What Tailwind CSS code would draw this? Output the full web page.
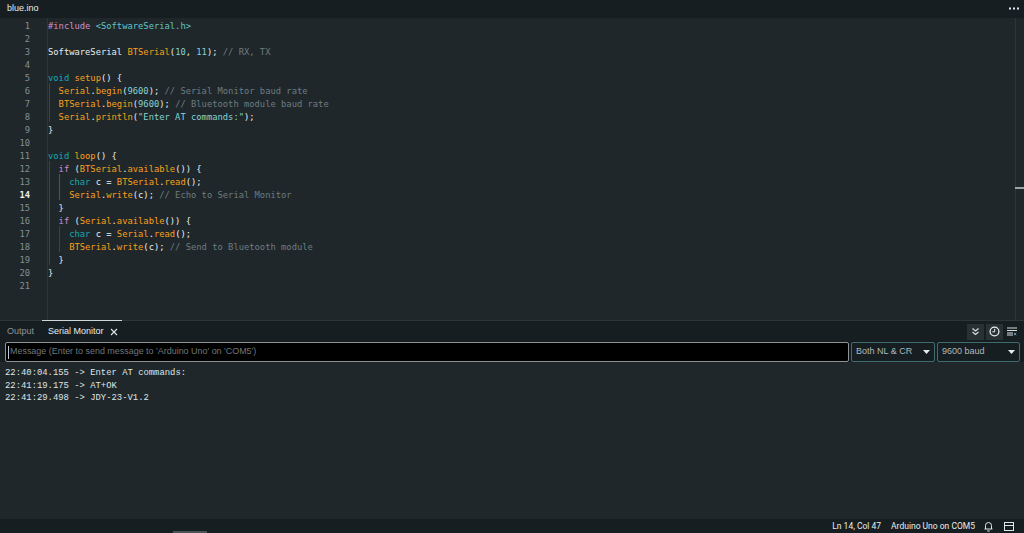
<!doctype html>
<html><head><meta charset="utf-8"><script src="https://cdn.jsdelivr.net/npm/@tailwindcss/browser@4"></script></head>
<body class="m-0 overflow-hidden bg-[#171e21]">
<div class="w-[1024px] h-[533px] flex flex-col bg-[#171e21] font-['Liberation_Sans',sans-serif] overflow-hidden">
  <div class="h-[18px] shrink-0 flex items-center justify-between bg-[#171e21]">
    <span class="pl-[7px] pb-[2px] text-[9px] text-[#e6eeee] leading-[15px]">blue.ino</span>
    <svg class="mr-[4px]" width="12" height="6" viewBox="0 0 12 6"><rect x="1" y="1.5" width="2" height="2" fill="#dfeaf0"/><rect x="5" y="1.5" width="2" height="2" fill="#dfeaf0"/><rect x="9" y="1.5" width="2" height="2" fill="#dfeaf0"/></svg>
  </div>
  <div class="h-[302px] shrink-0 flex bg-[#1f272a] relative">
    <div class="w-[48px] shrink-0 border-r border-[#2c3538] pt-[1.5px] text-right pr-[17px] font-['DejaVu_Sans_Mono',monospace] text-[8.8px] leading-[13.05px] text-[#828f94]">
      <div>1</div><div>2</div><div>3</div><div>4</div><div>5</div><div>6</div><div>7</div><div>8</div><div>9</div><div>10</div><div>11</div><div>12</div><div>13</div><div class="text-[#e8edee] font-bold">14</div><div>15</div><div>16</div><div>17</div><div>18</div><div>19</div><div>20</div><div>21</div>
    </div>
    <pre class="flex-1 pt-[1.5px] m-0 font-['DejaVu_Sans_Mono',monospace] text-[8.8px] leading-[13.05px] text-[#e6eef0] relative"><span class="text-[#cf8fca]">#include</span> <span class="text-[#62c4c8]">&lt;SoftwareSerial.h&gt;</span>

SoftwareSerial <span class="text-[#f7a01a]">BTSerial</span>(<span class="text-[#86d3d6]">10</span>, <span class="text-[#86d3d6]">11</span>); <span class="text-[#6d7c82]">// RX, TX</span>

<span class="text-[#12aab0]">void</span> <span class="text-[#f7a01a]">setup</span>() {
  <span class="text-[#f7a01a]">Serial</span>.<span class="text-[#f7a01a]">begin</span>(<span class="text-[#86d3d6]">9600</span>); <span class="text-[#6d7c82]">// Serial Monitor baud rate</span>
  <span class="text-[#f7a01a]">BTSerial</span>.<span class="text-[#f7a01a]">begin</span>(<span class="text-[#86d3d6]">9600</span>); <span class="text-[#6d7c82]">// Bluetooth module baud rate</span>
  <span class="text-[#f7a01a]">Serial</span>.<span class="text-[#f7a01a]">println</span>(<span class="text-[#86d3d6]">"Enter AT commands:"</span>);
}

<span class="text-[#12aab0]">void</span> <span class="text-[#f7a01a]">loop</span>() {
  <span class="text-[#cf8fca]">if</span> (<span class="text-[#f7a01a]">BTSerial</span>.<span class="text-[#f7a01a]">available</span>()) {
    <span class="text-[#12aab0]">char</span> c = <span class="text-[#f7a01a]">BTSerial</span>.<span class="text-[#f7a01a]">read</span>();
    <span class="text-[#f7a01a]">Serial</span>.<span class="text-[#f7a01a]">write</span>(c); <span class="text-[#6d7c82]">// Echo to Serial Monitor</span>
  }
  <span class="text-[#cf8fca]">if</span> (<span class="text-[#f7a01a]">Serial</span>.<span class="text-[#f7a01a]">available</span>()) {
    <span class="text-[#12aab0]">char</span> c = <span class="text-[#f7a01a]">Serial</span>.<span class="text-[#f7a01a]">read</span>();
    <span class="text-[#f7a01a]">BTSerial</span>.<span class="text-[#f7a01a]">write</span>(c); <span class="text-[#6d7c82]">// Send to Bluetooth module</span>
  }
}
</pre>
    <div class="absolute left-[49px] top-[65px] h-[39px] w-px bg-[#3a4447]"></div>
    <div class="absolute left-[49px] top-[143px] h-[104px] w-px bg-[#3a4447]"></div>
    <div class="absolute left-[59px] top-[156px] h-[26px] w-px bg-[#4c575b]"></div>
    <div class="absolute left-[59px] top-[208px] h-[26px] w-px bg-[#3a4447]"></div>
    <div class="absolute right-0 top-0 bottom-0 w-[9px] border-l border-[#2c3538]"></div>
    <div class="absolute right-0 top-[169px] w-[9px] h-[2px] bg-[#9aa5a8]"></div>
  </div>
  <div class="h-[22px] shrink-0 flex items-center justify-between bg-[#171e21] border-t border-[#2c3538] relative">
    <div class="flex items-center text-[9px] leading-[16px] h-full pb-[1px]">
      <span class="pl-[7px] w-[42px] text-[#8a9497]">Output</span>
      <span class="relative h-full flex items-center w-[80px] pl-[6px] text-[#e6eeee] gap-[6px]"><span class="absolute left-0 right-0 -top-px h-px bg-[#cfd6d8]"></span>Serial Monitor
        <svg class="mt-[2px]" width="8" height="8" viewBox="0 0 8 8"><path d="M1 1l6 6M7 1L1 7" stroke="#dfe7e8" stroke-width="1.1"/></svg>
      </span>
    </div>
    <div class="flex items-center mr-[7px] gap-[2px]">
      <span class="w-[17px] h-[16px] bg-[#283134] flex items-center justify-center"><svg width="9" height="9" viewBox="0 0 9 9" fill="none" stroke="#d5dde0" stroke-width="1.2"><path d="M1.5 1.5L4.5 4l3-2.5M1.5 5L4.5 7.5l3-2.5"/></svg></span>
      <span class="w-[17px] h-[16px] bg-[#283134] flex items-center justify-center"><svg width="11" height="11" viewBox="0 0 11 11" fill="none" stroke="#e8eef0" stroke-width="1.3"><circle cx="5.5" cy="5.5" r="4.4"/><path d="M5.7 2.8v3H3.3" stroke-width="1"/></svg></span>
      <span class="w-[12px] h-[16px] flex items-center justify-end"><svg width="10" height="9" viewBox="0 0 10 9" stroke="#d5dde0" stroke-width="1"><path d="M0 1h10M0 3.5h10M0 6h6M0 8h6"/><path d="M7.2 6.2l2 1.8M9.2 6.2l-2 1.8" stroke="#6fb6c4"/></svg></span>
    </div>
  </div>
  <div class="h-[20px] shrink-0 flex gap-[2px] pl-[5px] pr-[4px] bg-[#171e21]">
    <div class="w-[844px] h-[20px] bg-black border border-[#8b9396] rounded-[2px] flex items-center pl-[2px] text-[8.95px] text-[#6f787b] relative"><span class="w-px h-[13px] bg-[#c4cacc] mr-px"></span>Message (Enter to send message to 'Arduino Uno' on 'COM5')</div>
    <div class="w-[84px] h-[20px] bg-[#171e21] border border-[#3f6c71] rounded-[2px] flex items-center justify-between pl-[4px] pr-[4px] text-[9px] text-[#aeb9bc]">Both NL &amp; CR<svg width="7" height="4" viewBox="0 0 7 4"><path d="M0 0h7L3.5 4z" fill="#e5ecee"/></svg></div>
    <div class="w-[83px] h-[20px] bg-[#171e21] border border-[#3f6c71] rounded-[2px] flex items-center justify-between pl-[4px] pr-[4px] text-[9px] text-[#aeb9bc]">9600 baud<svg width="7" height="4" viewBox="0 0 7 4"><path d="M0 0h7L3.5 4z" fill="#e5ecee"/></svg></div>
  </div>
  <div class="flex-1 bg-[#1f272a] pl-[5px] pt-[5px] font-['Liberation_Mono',monospace] text-[8.9px] leading-[12.5px] text-[#dfe5e7] whitespace-pre"><div>22:40:04.155 -&gt; Enter AT commands:</div><div>22:41:19.175 -&gt; AT+OK</div><div>22:41:29.498 -&gt; JDY-23-V1.2</div></div>
  <div class="h-[14px] shrink-0 bg-[#171e21] relative flex items-center justify-end font-['Roboto',sans-serif] text-[8.5px] text-[#e6eeee]">
    <span class="mr-[10px] pt-[1px]">Ln 14, Col 47</span><span class="mr-[9px] pt-[1px]">Arduino Uno on COM5</span>
    <svg class="mr-[11px]" width="9" height="11" viewBox="0 0 9 11" fill="none" stroke="#dfe7e8"><path d="M.5 8h8M1.5 8V4.5a3 3 0 016 0V8M3.2 10h2.6"/></svg>
    <svg class="mr-[10px]" width="10" height="9" viewBox="0 0 10 9" fill="none" stroke="#dfe7e8"><rect x=".5" y=".5" width="9" height="8"/><path d="M.5 3.5h9"/></svg>
    <span class="absolute left-[173px] bottom-0 w-[34px] h-[2px] bg-[#4a5356]"></span>
  </div>
</div>
</body></html>
